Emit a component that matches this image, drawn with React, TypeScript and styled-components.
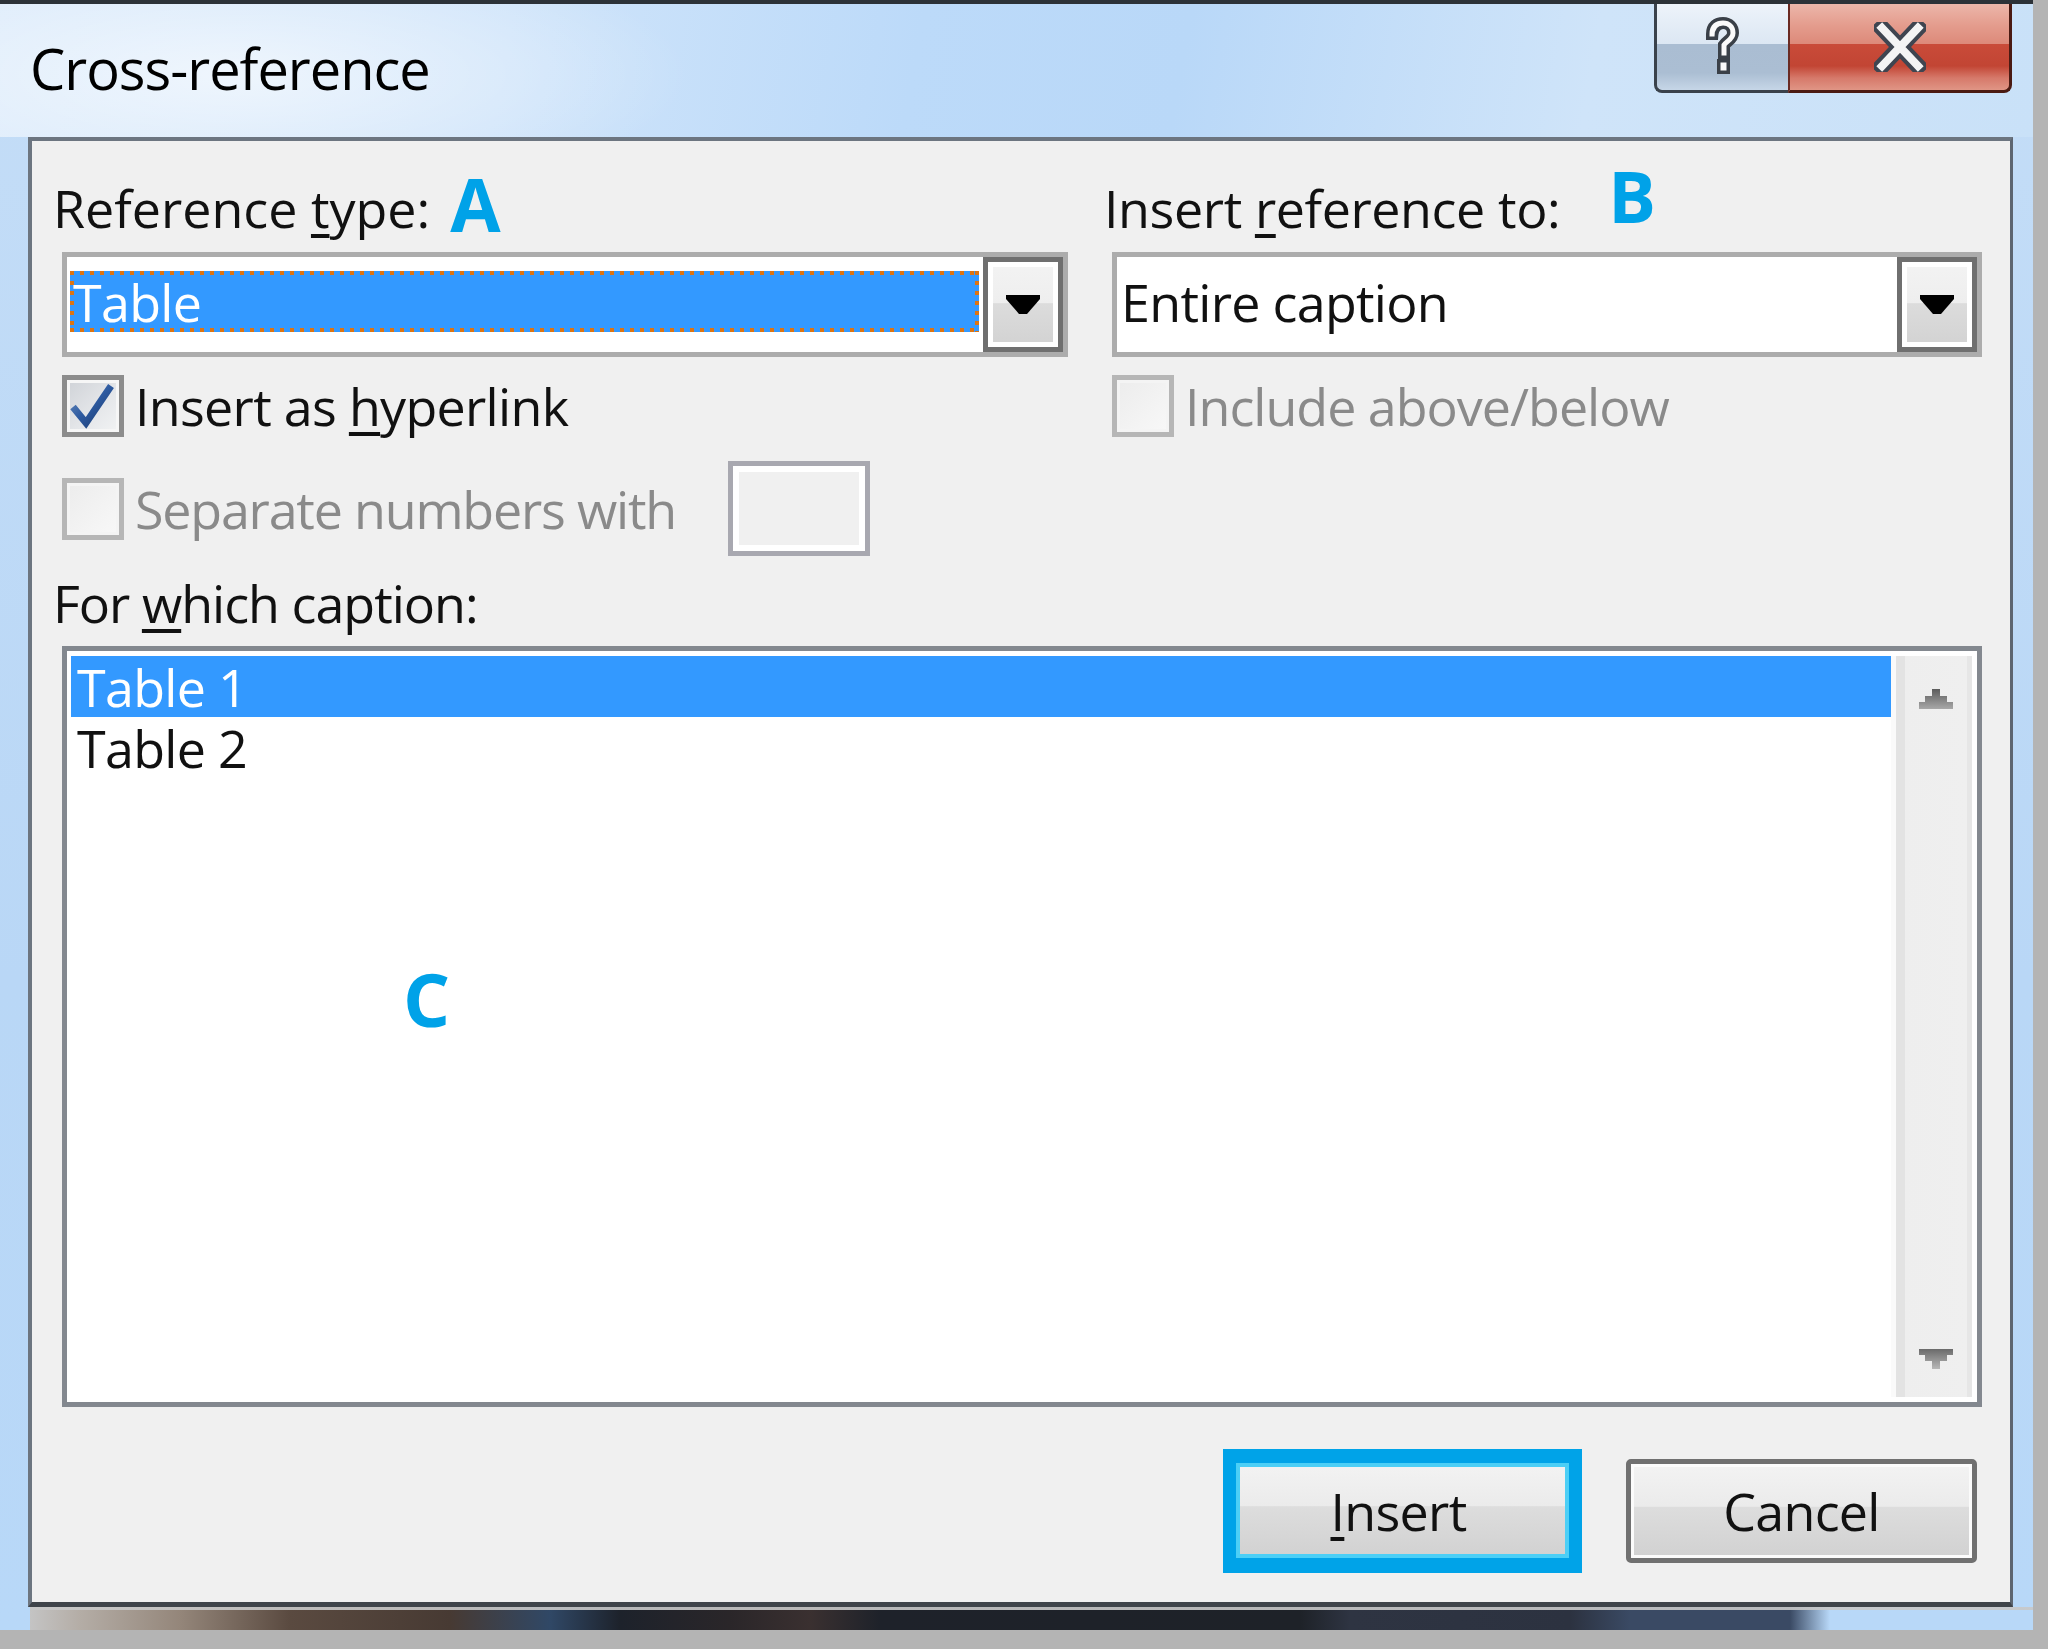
import React from 'react'
import styled, { createGlobalStyle } from 'styled-components'

const GlobalStyle = createGlobalStyle`
  html, body {
    margin: 0;
    padding: 0;
  }
  body {
    background: #b4b4b4;
    font-family: 'Open Sans', 'Noto Sans', sans-serif;
    color: #111;
  }
`

const Page = styled.div`
  width: 2048px;
  height: 1649px;
  overflow: hidden;
`

const Window = styled.div`
  width: 2033px;
  height: 1630px;
  display: flex;
  flex-direction: column;
  background: linear-gradient(180deg, #c4ddf7 0%, #b9d7f6 60%, #b8d8f8 100%);
`

const TitleBar = styled.div`
  height: 137px;
  box-sizing: border-box;
  border-top: 4px solid #2c3238;
  display: flex;
  align-items: flex-start;
  background:
    radial-gradient(ellipse 460px 130px at 230px 70px, rgba(255, 255, 255, 0.6), rgba(255, 255, 255, 0) 100%),
    linear-gradient(100deg, #dcebfb 0%, #cfe4fa 25%, #bcdaf9 45%, #b9d8f8 58%, #cfe4f9 78%, #c9e1f8 100%);
`

const Title = styled.div`
  margin: 32px 0 0 30px;
  font-size: 56px;
  line-height: 64px;
  letter-spacing: -1px;
  color: #000;
  white-space: nowrap;
`

const CaptionButtons = styled.div`
  margin-left: auto;
  margin-right: 21px;
  display: flex;
  height: 89px;
`

const HelpButton = styled.div`
  width: 134px;
  box-sizing: border-box;
  border-left: 3px solid #3a424c;
  border-bottom: 3px solid #3a424c;
  border-bottom-left-radius: 8px;
  display: flex;
  align-items: center;
  justify-content: center;
  background: linear-gradient(180deg, #edf3fa 0%, #dce7f3 46%, #aabdd2 47%, #abbed3 80%, #c6d6e7 100%);
`

const CloseButton = styled.div`
  width: 224px;
  box-sizing: border-box;
  border-left: 2px solid #6a2a22;
  border-right: 3px solid #4a1a12;
  border-bottom: 3px solid #4a1a12;
  border-bottom-right-radius: 8px;
  display: flex;
  align-items: center;
  justify-content: center;
  background: linear-gradient(180deg, #ecb6aa 0%, #e49c8d 25%, #dd8a7a 46%, #c94b39 47%, #c24534 72%, #d6796a 86%, #e09585 100%);
`

const Body = styled.div`
  padding: 0 20px 0 28px;
`

const Panel = styled.div`
  box-sizing: border-box;
  height: 1470px;
  background: #f0f0f0;
  border-style: solid;
  border-width: 4px 3px 5px 4px;
  border-color: #6c7580 #5d6570 #3f444a #6c7580;
  padding: 37px 28px 0 30px;
  display: flex;
  flex-direction: column;
`

const BottomGlass = styled.div`
  height: 23px;
  margin-left: 30px;
  background:
    linear-gradient(180deg, rgba(200, 200, 200, 0.9) 0, rgba(200, 200, 200, 0.9) 3px, rgba(0, 0, 0, 0) 3px),
    linear-gradient(90deg, #c4c4c4 0, #b4ada6 50px, #94867a 150px, #5a4a40 260px, #473a33 420px, #304866 520px, #1d222b 590px, #2a2629 700px, #3a3030 780px, #1e222a 850px, #1e2228 1270px, #2e3442 1320px, #2c3240 1540px, #3a4a64 1600px, #3a4a64 1760px, #b8d8f8 1800px, #b8d8f8 100%);
`

const UpperGrid = styled.div`
  display: grid;
  grid-template-columns: 1006px 870px;
  column-gap: 44px;
`

const Column = styled.div`
  display: flex;
  flex-direction: column;
`

const LabelRow = styled.div<{ $indent: number; $gap?: number }>`
  display: flex;
  align-items: baseline;
  height: 60px;
  margin-left: ${(p) => p.$indent}px;
  margin-top: ${(p) => p.$gap ?? 0}px;
`

const Label = styled.span<{ $disabled?: boolean; $spacing?: number }>`
  font-size: 52px;
  line-height: 60px;
  letter-spacing: ${(p) => p.$spacing ?? -0.7}px;
  white-space: nowrap;
  color: ${(p) => (p.$disabled ? '#8a8a8a' : '#111')};
`

const Key = styled.u`
  text-decoration-thickness: 4px;
  text-underline-offset: 6px;
`

const Annotation = styled.span<{ $size: number; $left: number; $dy: number }>`
  position: relative;
  top: ${(p) => p.$dy}px;
  margin-left: ${(p) => p.$left}px;
  font-size: ${(p) => p.$size}px;
  line-height: 44px;
  font-weight: 700;
  color: #00a2e8;
`

const FloatingAnnotation = styled.span`
  position: absolute;
  left: 336px;
  top: 311px;
  font-size: 74px;
  line-height: 74px;
  font-weight: 700;
  color: #00a2e8;
`

const Combo = styled.div`
  margin-top: 14px;
  height: 105px;
  box-sizing: border-box;
  border: 5px solid #acacac;
  background: #fff;
  display: flex;
`

const ComboValue = styled.div<{ $selected?: boolean }>`
  flex: 1;
  align-self: flex-start;
  margin: 14px 4px 0 3px;
  height: 61px;
  box-sizing: border-box;
  padding-left: ${(p) => (p.$selected ? 3 : 1)}px;
  font-size: 52px;
  line-height: 61px;
  letter-spacing: -0.7px;
  white-space: nowrap;
  color: ${(p) => (p.$selected ? '#fff' : '#111')};
  background: ${(p) =>
    p.$selected
      ? `repeating-linear-gradient(90deg, #dc7412 0 4px, transparent 4px 10px) top left / 100% 4px no-repeat,
         repeating-linear-gradient(90deg, #dc7412 0 4px, transparent 4px 10px) bottom left / 100% 4px no-repeat,
         repeating-linear-gradient(180deg, #dc7412 0 4px, transparent 4px 10px) top left / 4px 100% no-repeat,
         repeating-linear-gradient(180deg, #dc7412 0 4px, transparent 4px 10px) top right / 4px 100% no-repeat,
         #3399ff`
      : 'transparent'};
`

const ComboButton = styled.div`
  width: 80px;
  flex-shrink: 0;
  box-sizing: border-box;
  border: 5px solid #6f6f6f;
  box-shadow: inset 0 0 0 5px #fff;
  background: linear-gradient(180deg, #f3f3f3 0%, #eeeeee 48%, #dcdcdc 49%, #d2d2d2 100%);
  display: flex;
  align-items: center;
  justify-content: center;
`

const CheckRow = styled.div<{ $gap: number }>`
  display: flex;
  align-items: center;
  margin-top: ${(p) => p.$gap}px;
`

const CheckItem = styled.div<{ $width?: number }>`
  display: flex;
  align-items: center;
  gap: 11px;
  width: ${(p) => (p.$width ? `${p.$width}px` : 'auto')};
  flex-shrink: 0;
`

const CheckBox = styled.span<{ $disabled?: boolean }>`
  width: 62px;
  height: 62px;
  box-sizing: border-box;
  flex-shrink: 0;
  border: 5px solid ${(p) => (p.$disabled ? '#b6b6b6' : '#8c8c8c')};
  box-shadow: inset 0 0 0 3px ${(p) => (p.$disabled ? '#f4f4f4' : '#f6f6f6')};
  background: ${(p) =>
    p.$disabled
      ? 'linear-gradient(135deg, #ececec 0%, #f8f8f8 100%)'
      : 'linear-gradient(135deg, #cfd2d7 0%, #e4e6e9 55%, #f2f3f4 100%)'};
  display: flex;
  align-items: center;
  justify-content: center;
`

const TextBox = styled.div`
  width: 142px;
  height: 95px;
  box-sizing: border-box;
  border: 5px solid #a8a8b0;
  box-shadow: inset 0 0 0 6px #fff;
  background: #f0f0f0;
`

const ListBox = styled.div`
  position: relative;
  margin-top: 13px;
  height: 761px;
  box-sizing: border-box;
  border: 5px solid #83888f;
  padding: 5px 5px 5px 4px;
  background: #fff;
  display: flex;
`

const ListRows = styled.div`
  flex: 1;
  display: flex;
  flex-direction: column;
`

const ListRow = styled.div<{ $selected?: boolean }>`
  height: 61px;
  padding-left: 6px;
  font-size: 52px;
  line-height: 61px;
  letter-spacing: -0.7px;
  color: ${(p) => (p.$selected ? '#fff' : '#111')};
  background: ${(p) => (p.$selected ? '#3399ff' : 'transparent')};
`

const ScrollBar = styled.div`
  width: 81px;
  box-sizing: border-box;
  padding: 33px 0 28px 28px;
  display: flex;
  flex-direction: column;
  justify-content: space-between;
  background: linear-gradient(90deg, #fafafa 0, #fafafa 5px, #e3e3e3 5px, #e3e3e3 14px, #eeeeee 14px, #efefef 76px, #e6e6e6 76px);
`

const ButtonRow = styled.div`
  margin-top: 42px;
  display: flex;
  justify-content: flex-end;
  align-items: center;
  gap: 44px;
  padding-right: 5px;
`

const FocusFrame = styled.div`
  width: 359px;
  height: 124px;
  box-sizing: border-box;
  border-style: solid;
  border-color: #00a3e8;
  border-width: 14px 13px 15px 13px;
`

const ButtonFace = styled.div<{ $focused?: boolean }>`
  width: ${(p) => (p.$focused ? '100%' : '351px')};
  height: ${(p) => (p.$focused ? '100%' : '104px')};
  box-sizing: border-box;
  border: ${(p) => (p.$focused ? 'none' : '5px solid #707070')};
  border-radius: ${(p) => (p.$focused ? '0' : '5px')};
  box-shadow: inset 0 0 0 ${(p) => (p.$focused ? '4px #4ccff6' : '3px #fbfbfb')};
  background: linear-gradient(180deg, #f3f3f3 0%, #ebebeb 45%, #dddddd 46%, #d1d1d1 100%);
  display: flex;
  align-items: center;
  justify-content: center;
  padding-right: ${(p) => (p.$focused ? 8 : 0)}px;
  font-size: 52px;
  line-height: 60px;
  letter-spacing: -0.7px;
  color: #111;
`

const DropArrow = () => (
  <svg width="34" height="19" viewBox="0 0 34 19">
    <polygon points="0,0 34,0 34,4 21,19 13,19 0,4" fill="#000" />
  </svg>
)

const ScrollArrow = ({ down }: { down?: boolean }) => (
  <svg width="34" height="20" viewBox="0 0 34 20">
    <defs>
      <linearGradient id={down ? 'sdown' : 'sup'} x1="0" y1="0" x2="0" y2="1">
        <stop offset="0" stopColor={down ? '#6a6a6a' : '#5c5c5c'} />
        <stop offset="1" stopColor={down ? '#b8b8b8' : '#a8a8a8'} />
      </linearGradient>
    </defs>
    {down ? (
      <polygon points="0,0 34,0 34,6 28,6 28,12 21,12 21,20 13,20 13,12 6,12 6,6 0,6" fill="url(#sdown)" />
    ) : (
      <polygon points="13,0 21,0 21,7 28,7 28,13 34,13 34,20 0,20 0,13 6,13 6,7 13,7" fill="url(#sup)" />
    )}
  </svg>
)

const CheckMark = () => (
  <svg width="52" height="52" viewBox="0 0 52 52">
    <defs>
      <linearGradient id="chk" x1="0" y1="0" x2="1" y2="1">
        <stop offset="0" stopColor="#6d8fbf" />
        <stop offset="0.5" stopColor="#2d5aa0" />
        <stop offset="1" stopColor="#1c3a70" />
      </linearGradient>
    </defs>
    <polyline points="6,27 19,43 44,6" fill="none" stroke="url(#chk)" strokeWidth="7" strokeLinejoin="miter" />
  </svg>
)

const HelpGlyph = () => (
  <svg width="40" height="60" viewBox="0 0 40 60">
    <path d="M9 17 C9 9 14 6 20 6 C26 6 30 10 30 16 C30 22 24 24 21 28 L21 36" fill="none" stroke="#3a4048" strokeWidth="12" strokeLinecap="square" />
    <path d="M9 17 C9 9 14 6 20 6 C26 6 30 10 30 16 C30 22 24 24 21 28 L21 36" fill="none" stroke="#fafafa" strokeWidth="5" strokeLinecap="square" />
    <rect x="14" y="42" width="13" height="15" fill="#3a4048" />
    <rect x="17.5" y="45.5" width="6" height="8" fill="#fafafa" />
  </svg>
)

const CloseGlyph = () => (
  <svg width="52" height="50" viewBox="0 0 52 50">
    <path d="M8 6 L44 44 M44 6 L8 44" stroke="#3f4550" strokeWidth="16" strokeLinecap="square" />
    <path d="M8 6 L44 44 M44 6 L8 44" stroke="#f4f4f4" strokeWidth="8" strokeLinecap="square" />
  </svg>
)

const App = () => (
  <Page>
    <GlobalStyle />
    <Window>
      <TitleBar>
        <Title>Cross-reference</Title>
        <CaptionButtons>
          <HelpButton>
            <HelpGlyph />
          </HelpButton>
          <CloseButton>
            <CloseGlyph />
          </CloseButton>
        </CaptionButtons>
      </TitleBar>
      <Body>
        <Panel>
          <UpperGrid>
            <Column>
              <LabelRow $indent={-9}>
                <Label $spacing={0}>
                  Reference <Key>t</Key>ype:
                </Label>
                <Annotation $size={73} $left={20} $dy={4}>
                  A
                </Annotation>
              </LabelRow>
              <Combo>
                <ComboValue $selected>Table</ComboValue>
                <ComboButton>
                  <DropArrow />
                </ComboButton>
              </Combo>
              <CheckRow $gap={18}>
                <CheckItem>
                  <CheckBox>
                    <CheckMark />
                  </CheckBox>
                  <Label>
                    Insert as <Key>h</Key>yperlink
                  </Label>
                </CheckItem>
              </CheckRow>
              <CheckRow $gap={24}>
                <CheckItem $width={666}>
                  <CheckBox $disabled />
                  <Label $disabled $spacing={-1.2}>
                    Separate numbers with
                  </Label>
                </CheckItem>
                <TextBox />
              </CheckRow>
            </Column>
            <Column>
              <LabelRow $indent={-8}>
                <Label $spacing={-0.4}>
                  Insert <Key>r</Key>eference to:
                </Label>
                <Annotation $size={71} $left={48} $dy={-5}>
                  B
                </Annotation>
              </LabelRow>
              <Combo>
                <ComboValue>Entire caption</ComboValue>
                <ComboButton>
                  <DropArrow />
                </ComboButton>
              </Combo>
              <CheckRow $gap={18}>
                <CheckItem>
                  <CheckBox $disabled />
                  <Label $disabled $spacing={-1}>
                    Include above/below
                  </Label>
                </CheckItem>
              </CheckRow>
            </Column>
          </UpperGrid>
          <LabelRow $indent={-9} $gap={17}>
            <Label $spacing={-1}>
              For <Key>w</Key>hich caption:
            </Label>
          </LabelRow>
          <ListBox>
            <ListRows>
              <ListRow $selected>Table 1</ListRow>
              <ListRow>Table 2</ListRow>
            </ListRows>
            <ScrollBar>
              <ScrollArrow />
              <ScrollArrow down />
            </ScrollBar>
            <FloatingAnnotation>C</FloatingAnnotation>
          </ListBox>
          <ButtonRow>
            <FocusFrame>
              <ButtonFace $focused>
                <span>
                  <Key>I</Key>nsert
                </span>
              </ButtonFace>
            </FocusFrame>
            <ButtonFace>Cancel</ButtonFace>
          </ButtonRow>
        </Panel>
      </Body>
      <BottomGlass />
    </Window>
  </Page>
)

export default App
